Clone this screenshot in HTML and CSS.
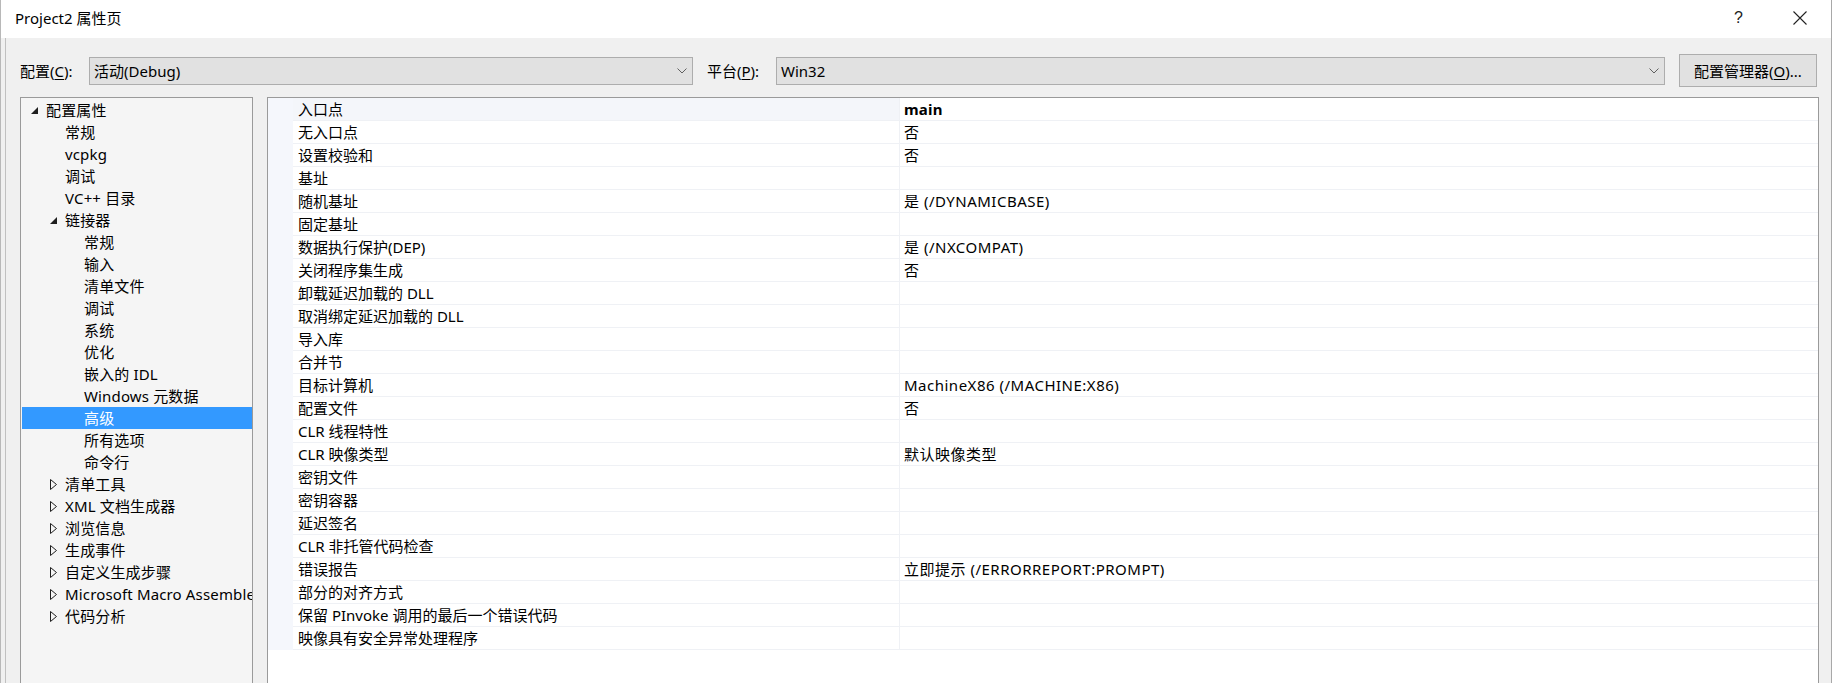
FILE: index.html
```html
<!DOCTYPE html>
<html lang="zh-CN">
<head>
<meta charset="utf-8">
<title>Project2 属性页</title>
<link rel="stylesheet" href="styles.css">
</head>
<body>
<div class="window">
  <div class="titlebar">
    <div class="title">Project2 属性页</div>
    <div class="caption-btns">
      <span class="help">?</span>
      <svg class="close" width="14" height="14" viewBox="0 0 14 14"><path d="M0.5 0.5 L13.5 13.5 M13.5 0.5 L0.5 13.5" stroke="#222" stroke-width="1.1" fill="none"/></svg>
    </div>
  </div>
  <div class="content">
    <div class="toolbar">
      <label class="lbl">配置(<u>C</u>):</label>
      <div class="combo combo-config"><span>活动(Debug)</span><svg class="chev" width="10" height="6" viewBox="0 0 10 6"><polyline points="0.5,0.5 5,5 9.5,0.5" fill="none" stroke="#606060" stroke-width="1"/></svg></div>
      <label class="lbl">平台(<u>P</u>):</label>
      <div class="combo combo-platform"><span>Win32</span><svg class="chev" width="10" height="6" viewBox="0 0 10 6"><polyline points="0.5,0.5 5,5 9.5,0.5" fill="none" stroke="#606060" stroke-width="1"/></svg></div>
      <button class="btn">配置管理器(<u>O</u>)...</button>
    </div>
    <div class="main">
      <div class="tree" id="tree"></div>
      <div class="grid" id="grid"></div>
    </div>
  </div>
</div>
<script src="app.js"></script>
</body>
</html>
```

FILE: app.js
```js
(function () {
  var EXP = '<svg width="18" height="22" viewBox="0 0 18 22"><polygon points="10,8 10,15 3,15" fill="#1e1e1e"/></svg>';
  var COL = '<svg width="18" height="22" viewBox="0 0 18 22"><polygon points="3.5,6.5 3.5,16.5 9.5,11.5" fill="none" stroke="#1e1e1e" stroke-width="1"/></svg>';
  var NONE = '<svg width="18" height="22" viewBox="0 0 18 22"></svg>';
  var tree = [
    [0, 'e', '配置属性'],
    [1, '', '常规'], [1, '', 'vcpkg'], [1, '', '调试'], [1, '', 'VC++ 目录'],
    [1, 'e', '链接器'],
    [2, '', '常规'], [2, '', '输入'], [2, '', '清单文件'], [2, '', '调试'], [2, '', '系统'],
    [2, '', '优化'], [2, '', '嵌入的 IDL'], [2, '', 'Windows 元数据'], [2, '', '高级', 1],
    [2, '', '所有选项'], [2, '', '命令行'],
    [1, 'c', '清单工具'], [1, 'c', 'XML 文档生成器'], [1, 'c', '浏览信息'], [1, 'c', '生成事件'],
    [1, 'c', '自定义生成步骤'], [1, 'c', 'Microsoft Macro Assembler'], [1, 'c', '代码分析']
  ];
  var th = '';
  tree.forEach(function (t) {
    var icon = t[1] === 'e' ? EXP : (t[1] === 'c' ? COL : NONE);
    th += '<div class="node lv' + t[0] + (t[3] ? ' sel' : '') + '"><span class="arrow">' + icon + '</span><span class="ntext">' + t[2] + '</span></div>';
  });
  document.getElementById('tree').innerHTML = th;

  var rows = [
    ['入口点', 'main'], ['无入口点', '否'], ['设置校验和', '否'], ['基址', ''],
    ['随机基址', '是 (/DYNAMICBASE)'], ['固定基址', ''], ['数据执行保护(DEP)', '是 (/NXCOMPAT)'],
    ['关闭程序集生成', '否'], ['卸载延迟加载的 DLL', ''], ['取消绑定延迟加载的 DLL', ''],
    ['导入库', ''], ['合并节', ''], ['目标计算机', 'MachineX86 (/MACHINE:X86)'], ['配置文件', '否'],
    ['CLR 线程特性', ''], ['CLR 映像类型', '默认映像类型'], ['密钥文件', ''], ['密钥容器', ''],
    ['延迟签名', ''], ['CLR 非托管代码检查', ''], ['错误报告', '立即提示 (/ERRORREPORT:PROMPT)'],
    ['部分的对齐方式', ''], ['保留 PInvoke 调用的最后一个错误代码', ''], ['映像具有安全异常处理程序', '']
  ];
  var gh = '';
  rows.forEach(function (r, i) {
    gh += '<div class="prow' + (i === 0 ? ' cur' : '') + '"><div class="gutter"></div><div class="pname">' + r[0] + '</div><div class="pval">' + r[1] + '</div></div>';
  });
  document.getElementById('grid').innerHTML = gh;
})();
```

FILE: styles.css
```css
html, body {
  margin: 0;
  padding: 0;
  width: 1832px;
  height: 683px;
  overflow: hidden;
  background: #f0f0f0;
  font-family: "Noto Sans", "Noto Sans CJK SC", sans-serif;
  font-size: 15px;
  color: #000;
}
.window {
  width: 1830px;
  height: 683px;
  border-right: 1px solid #a8a8a8;
  border-left: 1px solid #b8b8b8;
  display: flex;
  flex-direction: column;
  box-sizing: content-box;
  overflow: hidden;
}
.titlebar {
  height: 38px;
  flex: none;
  background: #fff;
  display: flex;
  align-items: center;
  justify-content: space-between;
}
.title {
  padding-left: 14px;
  line-height: 20px;
  margin-top: -2px;
}
.caption-btns {
  display: flex;
  align-items: center;
  margin-top: -3px;
}
.help {
  font-size: 16px;
  font-family: "Liberation Sans", sans-serif;
  font-weight: 300;
  color: #222;
  margin-right: 50px;
}
.close {
  margin-right: 24px;
}
.content {
  flex: 1;
  margin-left: 4px;
  border-left: 1px solid #c0c0c0;
  display: flex;
  flex-direction: column;
  min-height: 0;
}
.toolbar {
  margin-top: 16px;
  height: 33px;
  display: flex;
  align-items: center;
  padding-left: 14px;
  padding-right: 14px;
  flex: none;
}
.lbl {
  width: 69px;
  flex: none;
  line-height: 20px;
}
.lbl u, .btn u { text-decoration-thickness: 1px; text-underline-offset: 2px; }
.combo {
  height: 28px;
  box-sizing: border-box;
  background: #e1e1e1;
  border: 1px solid #adadad;
  display: flex;
  align-items: center;
  justify-content: space-between;
  padding: 0 5px 0 4px;
  flex: none;
}
.combo span { line-height: 20px; }
.combo-config { width: 604px; margin-right: 14px; }
.combo-platform { flex: 1; margin-right: 14px; }
.chev { margin-right: 0; }
.btn {
  width: 138px;
  height: 33px;
  flex: none;
  box-sizing: border-box;
  background: #e1e1e1;
  border: 1px solid #adadad;
  font: inherit;
  color: #000;
  padding: 0;
}
.main {
  margin-top: 10px;
  display: flex;
  padding-left: 14px;
  padding-right: 12px;
  flex: 1;
  min-height: 0;
  overflow: visible;
}
.tree {
  width: 233px;
  height: 640px;
  flex: none;
  box-sizing: border-box;
  border: 1px solid #9a9a9a;
  background: #f5f5f5;
  padding-top: 1px;
  overflow: hidden;
  margin-right: 14px;
}
.node {
  height: 22px;
  display: flex;
  align-items: center;
  white-space: nowrap;
  overflow: hidden;
  margin-left: 1px;
}
.node.lv0 { padding-left: 6px; }
.node.lv1 { padding-left: 25px; }
.node.lv2 { padding-left: 44px; }
.node.sel { background: #3399ff; color: #fff; }
.arrow { width: 18px; height: 22px; flex: none; display: block; }
.arrow svg { display: block; }
.ntext { line-height: 22px; letter-spacing: 0.15px; }
.grid {
  flex: 1;
  height: 640px;
  box-sizing: border-box;
  border: 1px solid #9a9a9a;
  background: #fff;
  overflow: hidden;
}
.prow {
  display: flex;
  height: 23px;
}
.gutter {
  width: 25px;
  flex: none;
  background: #f5f7fc;
}
.pname {
  width: 607px;
  flex: none;
  box-sizing: border-box;
  padding-left: 5px;
  line-height: 22px;
  border-bottom: 1px solid #eff1f5;
  border-right: 1px solid #eff1f5;
  white-space: nowrap;
}
.pval {
  flex: 1;
  padding-left: 4px;
  line-height: 22px;
  border-bottom: 1px solid #eff1f5;
  white-space: nowrap;
  letter-spacing: 0.5px;
}
.prow.cur .pname { background: #f4f6fa; }
.prow.cur .pval { font-weight: bold; letter-spacing: 0.2px; }
```
